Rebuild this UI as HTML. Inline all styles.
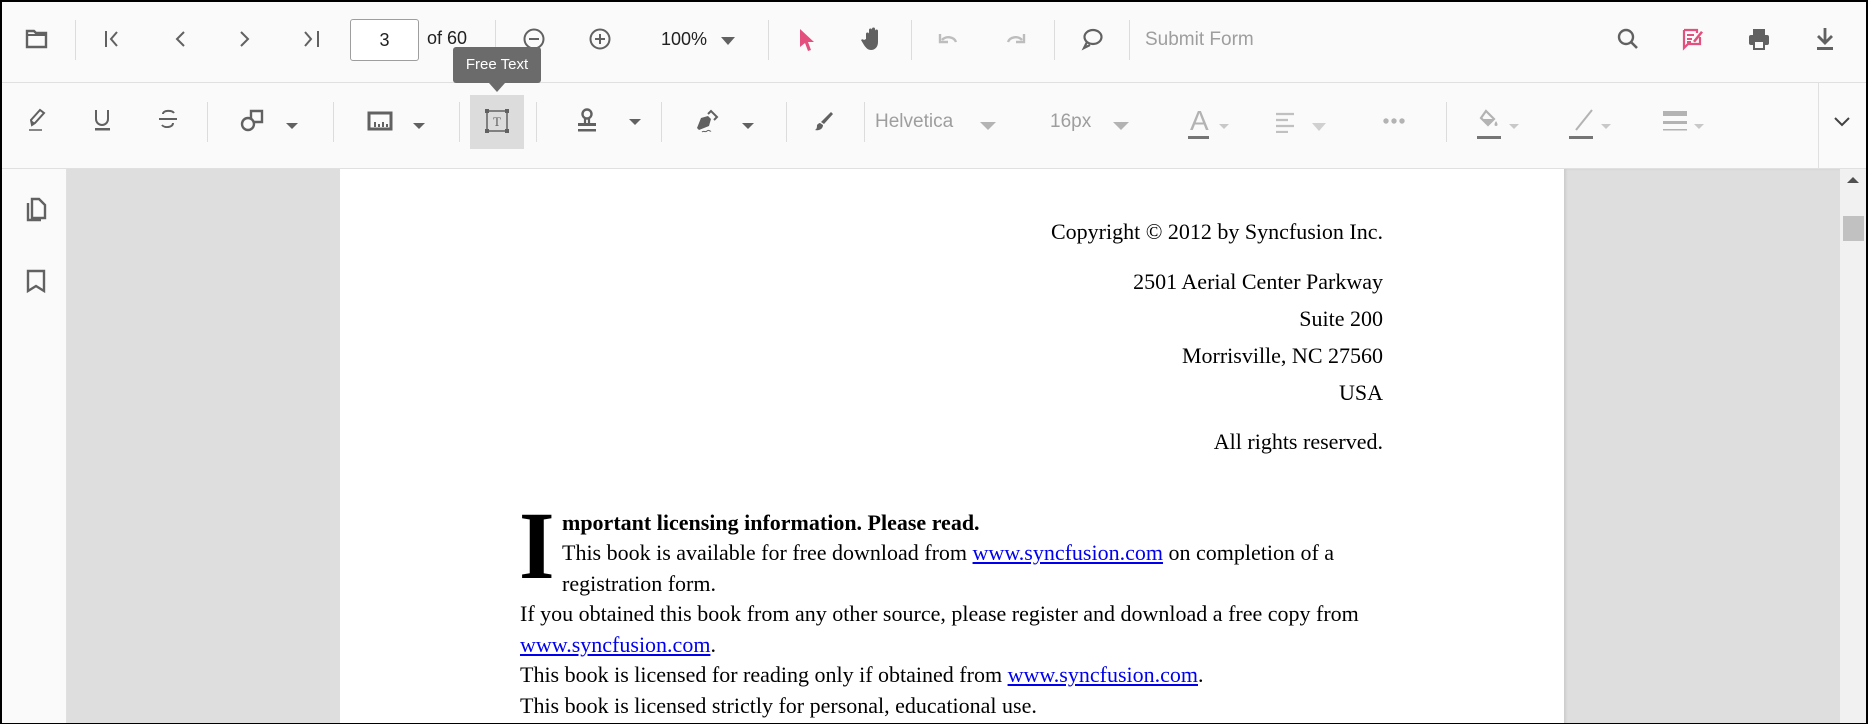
<!DOCTYPE html>
<html><head><meta charset="utf-8"><style>
*{margin:0;padding:0;box-sizing:border-box}
body{width:1868px;height:724px;overflow:hidden;background:#fff;font-family:"Liberation Sans",sans-serif;position:relative}
.frame{position:absolute;left:0;top:0;width:1868px;height:724px;border:2px solid #000;border-bottom:1px solid #000;pointer-events:none;z-index:50}
.tb1{position:absolute;left:0;top:0;width:1868px;height:83px;background:#fafafa;border-bottom:1px solid #e0e0e0}
.tb2{position:absolute;left:0;top:83px;width:1868px;height:86px;background:#fafafa;border-bottom:1px solid #e0e0e0}
.sep{position:absolute;width:1px;background:#dcdcdc}
.ic{position:absolute}
.t{position:absolute;white-space:nowrap}
.dd{position:absolute;width:0;height:0;border-left:6px solid transparent;border-right:6px solid transparent;border-top:6px solid #616161}
.ddl{position:absolute;width:0;height:0;border-left:5px solid transparent;border-right:5px solid transparent;border-top:5px solid #c8c8c8}
.pg{font-family:"Liberation Serif",serif;font-size:22px;line-height:25px;color:#000;position:absolute;white-space:nowrap}
.r{right:485px;text-align:right}
a{color:#0000ee;text-decoration:underline}
</style></head><body>
<div class="frame"></div>
<div class="tb1">
<svg class="ic" style="left:25px;top:28px" width="24" height="22" viewBox="0 0 24 22"><path d="M2 3h7l2 2h10v14H2z" fill="none" stroke="#616161" stroke-width="2.4"/><path d="M2 7h19" stroke="#616161" stroke-width="2"/></svg>
<div class="sep" style="left:75px;top:20px;height:40px"></div>
<svg class="ic" style="left:103px;top:29px" width="20" height="20"><path d="M3 2v16M14 3l-6 7 6 7" fill="none" stroke="#616161" stroke-width="2"/></svg>
<svg class="ic" style="left:171px;top:29px" width="20" height="20"><path d="M13 3l-7 7 7 7" fill="none" stroke="#616161" stroke-width="2"/></svg>
<svg class="ic" style="left:235px;top:29px" width="20" height="20"><path d="M6 3l7 7-7 7" fill="none" stroke="#616161" stroke-width="2"/></svg>
<svg class="ic" style="left:301px;top:29px" width="20" height="20"><path d="M4 3l6 7-6 7M17 2v16" fill="none" stroke="#616161" stroke-width="2"/></svg>
<div class="t" style="left:350px;top:19px;width:69px;height:42px;border:1px solid #9e9e9e;border-radius:3px;background:#fff;text-align:center;line-height:40px;font-size:18px;color:#212121">3</div>
<div class="t" style="left:427px;top:28px;font-size:18px;color:#212121">of 60</div>
<div class="sep" style="left:495px;top:20px;height:40px"></div>
<svg class="ic" style="left:522px;top:27px" width="24" height="24"><circle cx="12" cy="12" r="9.5" fill="none" stroke="#616161" stroke-width="2"/><path d="M7 12h10" stroke="#616161" stroke-width="2"/></svg>
<svg class="ic" style="left:588px;top:27px" width="24" height="24"><circle cx="12" cy="12" r="9.5" fill="none" stroke="#616161" stroke-width="2"/><path d="M7 12h10M12 7v10" stroke="#616161" stroke-width="2"/></svg>
<div class="t" style="left:661px;top:29px;font-size:18px;color:#212121">100%</div>
<div class="dd" style="left:721px;top:37px;border-left-width:7px;border-right-width:7px;border-top-width:8px"></div>
<div class="sep" style="left:768px;top:20px;height:40px"></div>
<svg class="ic" style="left:797px;top:27px" width="20" height="26"><path d="M3 2l14 13h-6l3 8-3 1-3-8-5 4z" fill="#e3507e"/></svg>
<svg class="ic" style="left:861px;top:26px" width="24" height="26"><path d="M5 13V8a1.5 1.5 0 013 0v4V4a1.5 1.5 0 013 0v8V3a1.5 1.5 0 013 0v9V5a1.5 1.5 0 013 0v11c0 5-3 8-7 8-3 0-5-2-7-5l-3-5c1-1 2-1 3 0z" fill="#616161"/></svg>
<div class="sep" style="left:911px;top:20px;height:40px"></div>
<svg class="ic" style="left:938px;top:30px" width="22" height="18"><path d="M4 10a8 7 0 0114 2" fill="none" stroke="#bdbdbd" stroke-width="2.4"/><path d="M2 4v8h8" fill="none" stroke="#bdbdbd" stroke-width="2.4"/></svg>
<svg class="ic" style="left:1004px;top:30px" width="22" height="18"><path d="M18 10a8 7 0 00-14 2" fill="none" stroke="#bdbdbd" stroke-width="2.4"/><path d="M20 4v8h-8" fill="none" stroke="#bdbdbd" stroke-width="2.4"/></svg>
<div class="sep" style="left:1054px;top:20px;height:40px"></div>
<svg class="ic" style="left:1080px;top:27px" width="24" height="24"><ellipse cx="13" cy="10" rx="8.5" ry="7" fill="none" stroke="#616161" stroke-width="2.2"/><path d="M7 15l-3 6 6-3" fill="none" stroke="#616161" stroke-width="2.2"/></svg>
<div class="sep" style="left:1129px;top:20px;height:40px"></div>
<div class="t" style="left:1145px;top:29px;font-size:19px;color:#9e9e9e">Submit Form</div>
<svg class="ic" style="left:1616px;top:27px" width="24" height="24"><circle cx="10" cy="10" r="7" fill="none" stroke="#616161" stroke-width="2.4"/><path d="M15 15l6 6" stroke="#616161" stroke-width="2.6"/></svg>
<svg class="ic" style="left:1681px;top:27px" width="24" height="24"><path d="M3 3h13v3M3 3v18l4-4h12v-7" fill="none" stroke="#e3507e" stroke-width="2.2"/><path d="M6 8h7M6 12h5M6 15h4" stroke="#e3507e" stroke-width="2"/><path d="M12 14l8-10 2 1.5-8 10z" fill="#e3507e"/></svg>
<svg class="ic" style="left:1747px;top:27px" width="24" height="24"><rect x="6" y="2" width="12" height="6" fill="#616161"/><rect x="2" y="8" width="20" height="10" rx="2" fill="#616161"/><rect x="7" y="14" width="10" height="8" fill="#fafafa" stroke="#616161" stroke-width="2"/></svg>
<svg class="ic" style="left:1813px;top:25px" width="24" height="28"><path d="M12 3v14M5 11l7 7 7-7" fill="none" stroke="#616161" stroke-width="2.8"/><rect x="4" y="22" width="16" height="3" fill="#616161"/></svg>
</div>

<div class="tb2">
<svg class="ic" style="left:26px;top:25px" width="22" height="24"><path d="M6 17l-1-5 9-10 4 3-9 10z" fill="none" stroke="#616161" stroke-width="2"/><path d="M5 12l4 3-3 3z" fill="#616161"/><path d="M3 22h13" stroke="#616161" stroke-width="1.5"/></svg>
<svg class="ic" style="left:92px;top:24px" width="20" height="26"><path d="M4 3v9a6 6 0 0012 0V3" fill="none" stroke="#616161" stroke-width="2"/><rect x="3" y="21" width="15" height="2.5" fill="#616161"/></svg>
<svg class="ic" style="left:157px;top:25px" width="22" height="24"><path d="M17 5c-2-3-11-3-11 1M5 17c2 3 11 3 11-2" fill="none" stroke="#616161" stroke-width="2"/><path d="M2 11h18" stroke="#616161" stroke-width="2"/></svg>
<div class="sep" style="left:207px;top:19px;height:40px"></div>
<svg class="ic" style="left:240px;top:25px" width="26" height="26"><circle cx="8" cy="16" r="6" fill="none" stroke="#616161" stroke-width="2.4"/><path d="M11 10V3h11v11h-8" fill="none" stroke="#616161" stroke-width="2.4"/></svg>
<div class="dd" style="left:286px;top:40px"></div>
<div class="sep" style="left:333px;top:19px;height:40px"></div>
<svg class="ic" style="left:367px;top:28px" width="26" height="20"><rect x="2" y="2" width="22" height="16" fill="none" stroke="#616161" stroke-width="3"/><path d="M8 16v-5M12 16v-3M16 16v-5M20 16v-3" stroke="#616161" stroke-width="2"/></svg>
<div class="dd" style="left:413px;top:40px"></div>
<div class="sep" style="left:459px;top:19px;height:40px"></div>
<div class="ic" style="left:470px;top:12px;width:54px;height:54px;background:#dcdcdc"></div>
<svg class="ic" style="left:484px;top:25px" width="26" height="26"><rect x="3" y="3" width="20" height="20" fill="none" stroke="#616161" stroke-width="1.5"/><rect x="1" y="1" width="4" height="4" fill="#616161"/><rect x="21" y="1" width="4" height="4" fill="#616161"/><rect x="1" y="21" width="4" height="4" fill="#616161"/><rect x="21" y="21" width="4" height="4" fill="#616161"/><text x="13" y="18" font-family="Liberation Serif" font-size="13" text-anchor="middle" fill="#616161">T</text></svg>
<div class="sep" style="left:536px;top:19px;height:40px"></div>
<svg class="ic" style="left:575px;top:24px" width="24" height="28"><circle cx="12" cy="7" r="4.5" fill="none" stroke="#616161" stroke-width="2.4"/><path d="M10 11v5M14 11v5" stroke="#616161" stroke-width="2.2"/><rect x="3" y="16" width="18" height="3" fill="#616161"/><rect x="3" y="22" width="18" height="2.5" fill="#616161"/></svg>
<div class="dd" style="left:629px;top:36px"></div>
<div class="sep" style="left:661px;top:19px;height:40px"></div>
<svg class="ic" style="left:694px;top:26px" width="26" height="26"><path d="M3 19l4-10 7-2 3 3-2 7-10 4z" fill="#616161"/><path d="M14 5l3-3 6 6-3 3" fill="none" stroke="#616161" stroke-width="2"/><path d="M8 23c2-2 3 1 5-1s3 1 4 0" fill="none" stroke="#616161" stroke-width="1"/></svg>
<div class="dd" style="left:742px;top:40px"></div>
<div class="sep" style="left:786px;top:19px;height:40px"></div>
<svg class="ic" style="left:813px;top:27px" width="22" height="22"><path d="M18 2l2 2-9 10-3-2z" fill="#616161"/><path d="M7 13l3 2c0 4-4 6-8 5 2-1 2-3 2-5 1-1 2-2 3-2z" fill="#616161"/></svg>
<div class="sep" style="left:864px;top:19px;height:40px"></div>
<div class="t" style="left:875px;top:28px;font-size:19px;color:#9e9e9e">Helvetica</div>
<div class="dd" style="left:980px;top:39px;border-left-width:8px;border-right-width:8px;border-top-width:8px;border-top-color:#b3b3b3"></div>
<div class="t" style="left:1050px;top:28px;font-size:19px;color:#9e9e9e">16px</div>
<div class="dd" style="left:1113px;top:39px;border-left-width:8px;border-right-width:8px;border-top-width:8px;border-top-color:#b3b3b3"></div>
<div class="t" style="left:1190px;top:22px;font-size:28px;color:#b3b3b3">A</div>
<div class="ic" style="left:1188px;top:53px;width:21px;height:3px;background:#757575"></div>
<div class="ddl" style="left:1219px;top:41px"></div>
<svg class="ic" style="left:1274px;top:28px" width="24" height="22"><path d="M2 3h18M2 9h12M2 15h18M2 21h12" stroke="#c0c0c0" stroke-width="2.2"/></svg>
<div class="dd" style="left:1312px;top:40px;border-left-width:7px;border-right-width:7px;border-top-width:8px;border-top-color:#d0d0d0"></div>
<svg class="ic" style="left:1382px;top:34px" width="24" height="8"><circle cx="4" cy="4" r="2.7" fill="#b3b3b3"/><circle cx="12" cy="4" r="2.7" fill="#b3b3b3"/><circle cx="20" cy="4" r="2.7" fill="#b3b3b3"/></svg>
<div class="sep" style="left:1446px;top:19px;height:40px"></div>
<svg class="ic" style="left:1477px;top:25px" width="22" height="22"><path d="M9 3l8 8-6 6-7-7z" fill="none" stroke="#b3b3b3" stroke-width="2.2"/><path d="M4 11h13l-6 6z" fill="#b3b3b3"/><path d="M19 13c-2 3-2 5 0 5s2-2 0-5z" fill="#b3b3b3"/></svg>
<div class="ic" style="left:1477px;top:53px;width:24px;height:3px;background:#757575"></div>
<div class="ddl" style="left:1509px;top:41px"></div>
<svg class="ic" style="left:1572px;top:25px" width="24" height="24"><path d="M4 22L20 2" stroke="#b3b3b3" stroke-width="2"/></svg>
<div class="ic" style="left:1569px;top:53px;width:24px;height:3px;background:#757575"></div>
<div class="ddl" style="left:1601px;top:41px"></div>
<svg class="ic" style="left:1663px;top:28px" width="24" height="26"><rect x="0" y="0" width="24" height="5" fill="#b3b3b3"/><rect x="0" y="10" width="24" height="3" fill="#b3b3b3"/><rect x="0" y="18" width="24" height="1.5" fill="#b3b3b3"/></svg>
<div class="ddl" style="left:1694px;top:41px"></div>
<div class="sep" style="left:1818px;top:0;height:86px;background:#e0e0e0"></div>
<svg class="ic" style="left:1833px;top:32px" width="18" height="14"><path d="M2 3l7 7 7-7" fill="none" stroke="#424242" stroke-width="2"/></svg>
</div>

<div class="t" style="left:453px;top:47px;width:88px;height:36px;background:#6b6b6b;border-radius:3px;color:#fff;font-size:15px;text-align:center;line-height:36px;z-index:10">Free Text</div>
<div class="ic" style="left:489px;top:83px;width:0;height:0;border-left:8px solid transparent;border-right:8px solid transparent;border-top:9px solid #6b6b6b;z-index:10"></div>

<div class="ic" style="left:0;top:169px;width:67px;height:555px;background:#fafafa;border-right:1px solid #e0e0e0"></div>
<svg class="ic" style="left:24px;top:196px" width="24" height="26"><path d="M8 3h7l6 6v13H8z" fill="none" stroke="#616161" stroke-width="2.4"/><path d="M4 7v17h13" fill="none" stroke="#616161" stroke-width="2.4"/></svg>
<svg class="ic" style="left:25px;top:268px" width="22" height="26"><path d="M3 3h16v20l-8-5-8 5z" fill="none" stroke="#616161" stroke-width="2.4"/></svg>
<div class="ic" style="left:67px;top:169px;width:273px;height:555px;background:#dedede"></div>
<div class="ic" style="left:340px;top:169px;width:1224px;height:555px;background:#fff"></div>
<div class="ic" style="left:1564px;top:169px;width:276px;height:555px;background:#dedede;box-shadow:inset 2px 0 2px #ccc"></div>
<div class="ic" style="left:1840px;top:169px;width:26px;height:555px;background:#f1f1f1"></div>
<div class="ic" style="left:1847px;top:177px;width:0;height:0;border-left:6px solid transparent;border-right:6px solid transparent;border-bottom:6px solid #505050"></div>
<div class="ic" style="left:1843px;top:216px;width:21px;height:25px;background:#c1c1c1"></div>

<div class="pg r" style="top:219px">Copyright © 2012 by Syncfusion Inc.</div>
<div class="pg r" style="top:269px">2501 Aerial Center Parkway</div>
<div class="pg r" style="top:306px">Suite 200</div>
<div class="pg r" style="top:343px">Morrisville, NC 27560</div>
<div class="pg r" style="top:380px">USA</div>
<div class="pg r" style="top:429px">All rights reserved.</div>
<div class="pg" style="left:519px;top:498px;font-size:96px;font-weight:bold;line-height:96px;transform:scaleX(0.95);transform-origin:left">I</div>
<div class="pg" style="left:562px;top:510px;font-weight:bold">mportant licensing information. Please read.</div>
<div class="pg" style="left:562px;top:540px">This book is available for free download from <a>www.syncfusion.com</a> on completion of a</div>
<div class="pg" style="left:562px;top:571px">registration form.</div>
<div class="pg" style="left:520px;top:601px">If you obtained this book from any other source, please register and download a free copy from</div>
<div class="pg" style="left:520px;top:632px"><a>www.syncfusion.com</a>.</div>
<div class="pg" style="left:520px;top:662px">This book is licensed for reading only if obtained from <a>www.syncfusion.com</a>.</div>
<div class="pg" style="left:520px;top:693px">This book is licensed strictly for personal, educational use.</div>
</body></html>
